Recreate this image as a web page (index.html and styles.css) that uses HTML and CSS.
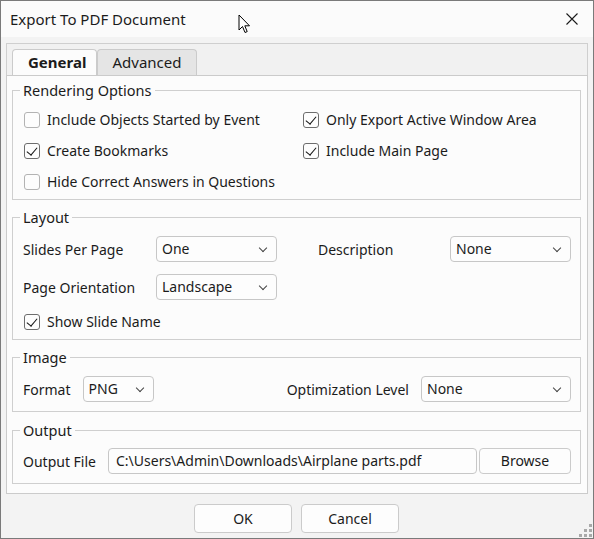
FILE: index.html
```html
<!DOCTYPE html>
<html lang="en">
<head>
    <meta charset="UTF-8">
    <title>Export To PDF Document</title>
    <link rel="stylesheet" href="styles.css">
</head>
<body>
    <div class="window">
        <div class="titlebar">
            <span class="title">Export To PDF Document</span>
            <svg class="close" width="12" height="12" viewBox="0 0 12 12">
                <path d="M0.5 0.5 L11.5 11.5 M11.5 0.5 L0.5 11.5" stroke="#1a1a1a" stroke-width="1.1" fill="none"/>
            </svg>
        </div>

        <div class="dialog">
            <div class="tabs">
                <div class="tab active">General</div>
                <div class="tab">Advanced</div>
            </div>

            <div class="panel">
                <fieldset class="group">
                    <legend>Rendering Options</legend>
                    <div class="check-grid">
                        <label class="check"><span class="box"></span>Include Objects Started by Event</label>
                        <label class="check"><span class="box checked"></span>Only Export Active Window Area</label>
                        <label class="check"><span class="box checked"></span>Create Bookmarks</label>
                        <label class="check"><span class="box checked"></span>Include Main Page</label>
                        <label class="check"><span class="box"></span>Hide Correct Answers in Questions</label>
                    </div>
                </fieldset>

                <fieldset class="group layout">
                    <legend>Layout</legend>
                    <div class="layout-grid">
                        <span class="field-label">Slides Per Page</span>
                        <div class="select">One</div>
                        <span class="field-label desc">Description</span>
                        <div class="select">None</div>
                        <span class="field-label">Page Orientation</span>
                        <div class="select">Landscape</div>
                    </div>
                    <label class="check slide-name"><span class="box checked"></span>Show Slide Name</label>
                </fieldset>

                <fieldset class="group row-group">
                    <legend>Image</legend>
                    <div class="row">
                        <span class="field-label">Format</span>
                        <div class="select format">PNG</div>
                        <span class="field-label opt">Optimization Level</span>
                        <div class="select level">None</div>
                    </div>
                </fieldset>

                <fieldset class="group row-group output">
                    <legend>Output</legend>
                    <div class="row">
                        <span class="field-label">Output File</span>
                        <div class="textbox">C:\Users\Admin\Downloads\Airplane parts.pdf</div>
                        <div class="button browse">Browse</div>
                    </div>
                </fieldset>
            </div>

            <div class="actions">
                <div class="button">OK</div>
                <div class="button">Cancel</div>
            </div>

            <div class="grip">
                <i style="left: 10px; top: 0"></i>
                <i style="left: 5px; top: 5px"></i>
                <i style="left: 10px; top: 5px"></i>
                <i style="left: 0; top: 10px"></i>
                <i style="left: 5px; top: 10px"></i>
                <i style="left: 10px; top: 10px"></i>
            </div>
        </div>

        <svg class="cursor" width="13" height="20" viewBox="0 0 13 20">
            <path d="M1 1 L1 16 L4.5 12.5 L7 18.5 L9.2 17.6 L6.8 11.8 L11.5 11.8 Z" fill="#fff" stroke="#000" stroke-width="1" stroke-linejoin="round"/>
        </svg>
    </div>
</body>
</html>
```

FILE: styles.css
```css
/* Export dialog */
* {
    box-sizing: border-box;
}

body {
    margin: 0;
    font-family: "Noto Sans", "Open Sans", sans-serif;
    font-size: 14px;
    color: #1b1b1b;
    background-color: #4a4f58;
}

.window {
    position: relative;
    width: 594px;
    height: 539px;
    border: 1px solid #7a7a7a;
    background-color: #f3f3f3;
    display: flex;
    flex-direction: column;
}

.titlebar {
    height: 36px;
    background-color: #fbfbfb;
    display: flex;
    align-items: center;
    justify-content: space-between;
    padding: 0 15px 0 9px;
}

.title {
    font-size: 15px;
}

.dialog {
    position: relative;
    flex: 1;
    padding: 6px 5px 0 5px;
}

.tabs {
    display: flex;
    height: 32px;
    padding: 5px 0 0 5px;
    border: 1px solid #cfcfcf;
    border-bottom: none;
    background-color: #f1f1f1;
}

.tab {
    height: 26px;
    padding: 0 15px;
    border: 1px solid #cbcbcb;
    border-bottom: none;
    border-radius: 4px 4px 0 0;
    background-color: #e5e5e5;
    line-height: 25px;
    font-size: 15px;
}

.tab.active {
    width: 85px;
    background-color: #fcfcfc;
    font-weight: bold;
}

.tab + .tab {
    width: 100px;
    text-align: center;
    padding: 0;
}

.panel {
    height: 419px;
    padding: 4px 6px 0 5px;
    border: 1px solid #cbcbcb;
    background-color: #fcfcfc;
}

.group {
    margin: 0 0 7px 0;
    padding: 4px 9px 2px 10px;
    border: 1px solid #cfcfcf;
    min-width: 0;
}

.group legend {
    padding: 0 3px;
    margin-left: -3px;
    line-height: 20px;
    font-size: 14.5px;
}

.check-grid {
    display: grid;
    grid-template-columns: 279px 1fr;
    grid-auto-rows: 31px;
}

.check {
    display: flex;
    align-items: center;
    white-space: nowrap;
}

.box {
    width: 16px;
    height: 16px;
    margin: 0 7px 0 1px;
    border: 1px solid #b3b3b3;
    border-radius: 3px;
    background-color: #fdfdfd;
    flex-shrink: 0;
    position: relative;
}

.box.checked {
    border-color: #6d6d6d;
}

.box.checked::after {
    content: "";
    position: absolute;
    left: 4px;
    top: 1px;
    width: 5px;
    height: 9px;
    border-right: 1.6px solid #111;
    border-bottom: 1.6px solid #111;
    transform: rotate(40deg);
}

.layout {
    padding-top: 9px;
    padding-bottom: 2px;
}

.layout-grid {
    display: grid;
    grid-template-columns: 133px 121px 1fr 121px;
    grid-auto-rows: 26px;
    row-gap: 12px;
    align-items: center;
}

.desc {
    padding-left: 41px;
}

.slide-name {
    height: 31px;
    margin-top: 6px;
}

.row-group {
    padding-top: 9px;
    padding-bottom: 9px;
}

.output {
    margin-top: 8px;
    padding-top: 8px;
}

.row {
    display: flex;
    align-items: center;
    height: 26px;
}

.select {
    position: relative;
    height: 26px;
    padding-left: 5px;
    border: 1px solid #c7c7c7;
    border-radius: 4px;
    background-color: #fdfdfd;
    line-height: 24px;
}

.select::after {
    content: "";
    position: absolute;
    right: 10px;
    top: 8px;
    width: 5px;
    height: 5px;
    border-right: 1.2px solid #444;
    border-bottom: 1.2px solid #444;
    transform: rotate(45deg);
}

.format {
    width: 71px;
    margin-left: 12px;
}

.opt {
    margin-left: auto;
}

.level {
    width: 150px;
    margin-left: 12px;
}

.textbox {
    flex: 1;
    height: 26px;
    margin-left: 12px;
    padding-left: 7px;
    border: 1px solid #c7c7c7;
    border-radius: 4px;
    background-color: #fdfdfd;
    line-height: 24px;
    white-space: nowrap;
}

.button {
    height: 29px;
    border: 1px solid #cbcbcb;
    border-radius: 4px;
    background-color: #fdfdfd;
    text-align: center;
    line-height: 27px;
}

.browse {
    width: 92px;
    height: 26px;
    margin-left: 2px;
    line-height: 24px;
}

.actions {
    display: flex;
    justify-content: center;
    gap: 9px;
    margin-top: 10px;
    margin-left: -1px;
}

.actions .button {
    width: 98px;
}

.grip {
    position: absolute;
    right: 2px;
    bottom: 2px;
    width: 12px;
    height: 12px;
}

.grip i {
    position: absolute;
    width: 3px;
    height: 3px;
    background-color: #a9a9a9;
}

.cursor {
    position: absolute;
    left: 237px;
    top: 13px;
}
```
